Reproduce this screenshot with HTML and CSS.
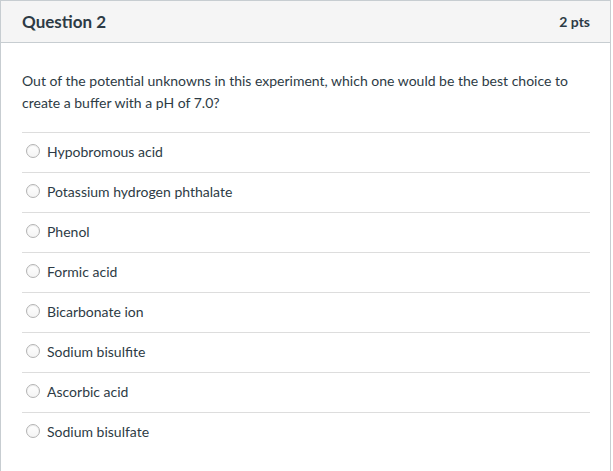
FILE: index.html
```html
<!DOCTYPE html>
<html>
<head>
<meta charset="utf-8">
<link rel="stylesheet" href="styles.css">
</head>
<body>
<div class="card">
  <div class="header">
    <span class="title">Question 2</span>
    <span class="pts">2 pts</span>
  </div>
  <div class="body">
    <p class="question">Out of the potential unknowns in this experiment, which one would be the best choice to create a buffer with a pH of 7.0?</p>
    <div class="answers">
      <label class="answer"><span class="radio"></span><span class="label">Hypobromous acid</span></label>
      <label class="answer"><span class="radio"></span><span class="label">Potassium hydrogen phthalate</span></label>
      <label class="answer"><span class="radio"></span><span class="label">Phenol</span></label>
      <label class="answer"><span class="radio"></span><span class="label">Formic acid</span></label>
      <label class="answer"><span class="radio"></span><span class="label">Bicarbonate ion</span></label>
      <label class="answer"><span class="radio"></span><span class="label">Sodium bisulfite</span></label>
      <label class="answer"><span class="radio"></span><span class="label">Ascorbic acid</span></label>
      <label class="answer"><span class="radio"></span><span class="label">Sodium bisulfate</span></label>
    </div>
  </div>
</div>
</body>
</html>
```
FILE: styles.css
```css
html, body {
  margin: 0;
  padding: 0;
  background: #ffffff;
}
body {
  font-family: Lato, "Open Sans", sans-serif;
  color: #2d3b45;
  overflow: hidden;
}
.card {
  width: 609px;
  height: 500px;
  border: 1px solid #c7cdd1;
  background: #ffffff;
}
.header {
  height: 41px;
  background: #f5f5f5;
  border-bottom: 1px solid #c7cdd1;
  display: flex;
  align-items: center;
  justify-content: space-between;
  padding: 0 20px 0 21px;
}
.title {
  font-size: 17px;
  font-weight: 700;
}
.pts {
  font-size: 14px;
  font-weight: 700;
  color: #2d3b45;
}
.body {
  padding: 27px 20px 0 21px;
}
.question {
  margin: 0 0 18px 0;
  font-size: 14px;
  line-height: 22px;
}
.answers {
  display: flex;
  flex-direction: column;
}
.answer {
  height: 36px;
  padding-bottom: 3px;
  border-top: 1px solid #dddddd;
  display: flex;
  align-items: center;
  font-size: 14px;
}
.radio {
  width: 12px;
  height: 12px;
  border: 1px solid #b3b3b3;
  border-radius: 50%;
  background: linear-gradient(#ffffff, #f4f4f4);
  margin-left: 4px;
  margin-right: 7px;
  box-shadow: inset 0 1px 1px rgba(0,0,0,0.08);
}
```
